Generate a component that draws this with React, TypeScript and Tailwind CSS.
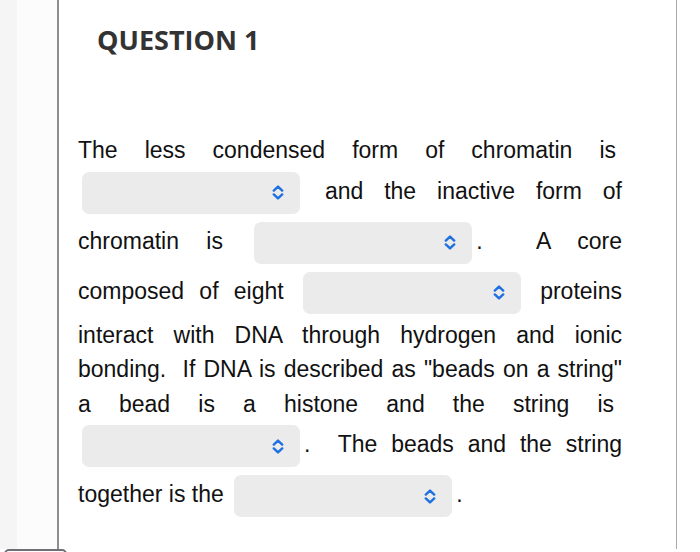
import React from "react";

// Drop-down placeholder: grey rounded field with the blue up/down chevron pair
function Dropdown() {
  return (
    <span className="inline-flex align-middle items-center justify-end m-1 w-[218px] h-[42px] rounded-[7px] bg-[#ebebeb] pr-[16px]">
      <svg width="12" height="15" viewBox="0 0 12 15" fill="none" aria-hidden="true">
        <path d="M1.8 5.6 L6 1.6 L10.2 5.6" stroke="#1f70e0" strokeWidth="2.4" strokeLinecap="round" strokeLinejoin="round" />
        <path d="M1.8 9.4 L6 13.4 L10.2 9.4" stroke="#1f70e0" strokeWidth="2.4" strokeLinecap="round" strokeLinejoin="round" />
      </svg>
    </span>
  );
}

const justified = "text-justify [text-align-last:justify]";

export default function App() {
  return (
    <div className="w-[700px] h-[552px] bg-white flex flex-col overflow-hidden">
      <div className="flex h-[549px]">
        <div className="w-[17px] bg-[#f5f5f5]" />
        <div className="w-[40px] bg-[#fcfcfc]" />
        <div className="w-[620px] border-l-2 border-r border-l-[#8d8d8d] border-r-[#a9a9a9] bg-white pl-[19px] pr-[54px] pt-[24px]">
          <h1
            className="ml-[19px] text-[27px] leading-[32px] font-bold text-[#333333]"
            style={{ fontFamily: '"Open Sans", "Liberation Sans", sans-serif' }}
          >
            QUESTION 1
          </h1>
          <div
            className="mt-[77px] text-[23px] leading-[34.5px] text-[#111111]"
            style={{ fontFamily: '"Liberation Sans", Arial, Helvetica, sans-serif' }}
          >
            <div className={`${justified} pr-[6px]`}>The less condensed form of chromatin is</div>
            <div className={justified}>
              <Dropdown /> and the inactive form of
            </div>
            <div className={justified}>
              chromatin is <Dropdown />.{"\u00A0 "}A core
            </div>
            <div className={justified}>
              composed of eight <Dropdown /> proteins
            </div>
            <div className={justified}>interact with DNA through hydrogen and ionic</div>
            <div className={justified}>{"bonding.\u00A0 If DNA is described as \"beads on a string\""}</div>
            <div className={`${justified} pr-[8px]`}>a bead is a histone and the string is</div>
            <div className={justified}>
              <Dropdown />.{"\u00A0 "}The beads and the string
            </div>
            <div>
              together is the <Dropdown />.
            </div>
          </div>
        </div>
        <div className="flex-1 bg-white" />
      </div>
      <div className="h-[3px] flex bg-white">
        <div className="ml-[4px] w-[63px] h-[6px] rounded-t-[5px] border-2 border-[#6f6f75]" />
      </div>
    </div>
  );
}
